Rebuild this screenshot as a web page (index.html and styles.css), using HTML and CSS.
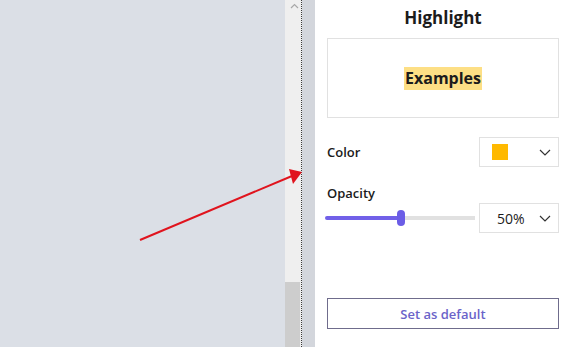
FILE: index.html
```html
<!DOCTYPE html>
<html>
<head>
<meta charset="utf-8">
<link rel="stylesheet" href="styles.css">
</head>
<body>
<div class="app">
  <div class="canvas"></div>
  <div class="scrollbar">
    <div class="scroll-track">
      <svg class="scroll-up" width="9" height="6" viewBox="0 0 9 6"><path d="M1 5 L4.5 1.5 L8 5" fill="none" stroke="#a8a8a8" stroke-width="1.2"/></svg>
    </div>
    <div class="scroll-thumb"></div>
  </div>
  <div class="gutter"><div class="gutter-line"></div></div>
  <div class="panel">
    <div class="title">Highlight</div>
    <div class="preview"><span class="preview-text">Examples</span></div>
    <div class="row row-color">
      <span class="label">Color</span>
      <div class="dropdown">
        <span class="swatch"></span>
        <svg class="chev" width="12" height="7" viewBox="0 0 12 7"><path d="M1 1 L6 6 L11 1" fill="none" stroke="#333" stroke-width="1.2"/></svg>
      </div>
    </div>
    <div class="label label-opacity">Opacity</div>
    <div class="row row-opacity">
      <div class="slider">
        <div class="slider-fill"></div>
        <div class="slider-thumb"></div>
        <div class="slider-rest"></div>
      </div>
      <div class="dropdown">
        <span class="value">50%</span>
        <svg class="chev" width="12" height="7" viewBox="0 0 12 7"><path d="M1 1 L6 6 L11 1" fill="none" stroke="#333" stroke-width="1.2"/></svg>
      </div>
    </div>
    <div class="spacer"></div>
    <button class="default-btn">Set as default</button>
  </div>
</div>
<svg class="arrow" width="565" height="347" viewBox="0 0 565 347">
  <line x1="140" y1="240" x2="292" y2="176" stroke="#e0141e" stroke-width="2"/>
  <polygon points="302,172 289,169 293,184" fill="#e0141e"/>
</svg>
</body>
</html>
```

FILE: styles.css
```css
* { box-sizing: border-box; }
html, body { margin: 0; padding: 0; }
body {
  width: 565px;
  height: 347px;
  overflow: hidden;
  font-family: "Open Sans", "Noto Sans", sans-serif;
  color: #1b1b1b;
  background: #fff;
  position: relative;
}
.app {
  display: flex;
  height: 347px;
}
.canvas {
  width: 285px;
  background: #dbdfe6;
}
.scrollbar {
  width: 15px;
  display: flex;
  flex-direction: column;
  background: #efefef;
}
.scroll-track {
  height: 282px;
  display: flex;
  justify-content: center;
  padding-top: 3px;
  padding-left: 3px;
}
.scroll-up { display: block; }
.scroll-thumb {
  flex: 1;
  background: #cdcdcd;
}
.gutter {
  width: 15px;
  background: #d3d6dc;
  display: flex;
}
.gutter-line {
  width: 2px;
  background: #eeeeee;
  border-right: 1px dotted #3a3a3a;
}
.panel {
  width: 250px;
  padding: 0 6px 0 12px;
  display: flex;
  flex-direction: column;
  background: #fff;
}
.title {
  height: 38px;
  line-height: 36px;
  text-align: center;
  font-weight: 700;
  font-size: 17px;
}
.preview {
  height: 80px;
  border: 1px solid #e1e1e1;
  display: flex;
  align-items: center;
  justify-content: center;
}
.preview-text {
  font-weight: 700;
  font-size: 16px;
  background: #fddf85;
  padding: 0 1px;
  line-height: 23px;
}
.row {
  display: flex;
  align-items: center;
  justify-content: space-between;
}
.row-color {
  margin-top: 19px;
  height: 30px;
}
.label {
  font-size: 13px;
  font-weight: 600;
}
.label-opacity {
  margin-top: 12px;
  line-height: 28px;
}
.row-opacity {
  margin-top: -4px;
  height: 30px;
}
.dropdown {
  width: 80px;
  height: 30px;
  border: 1px solid #e1e1e1;
  display: flex;
  align-items: center;
  padding: 0 7px 0 12px;
}
.swatch {
  width: 16px;
  height: 16px;
  background: #ffb900;
}
.value {
  font-size: 14px;
  margin-left: 5px;
}
.chev {
  margin-left: auto;
  display: block;
}
.slider {
  width: 150px;
  margin-left: -2px;
  display: flex;
  align-items: center;
  height: 16px;
}
.slider-fill {
  width: 72px;
  height: 4px;
  background: #7160e8;
  border-radius: 2px 0 0 2px;
}
.slider-thumb {
  width: 8px;
  height: 16px;
  border-radius: 4px;
  background: #6b5de6;
}
.slider-rest {
  flex: 1;
  height: 4px;
  background: #e1e1e1;
}
.spacer { flex: 1; }
.default-btn {
  margin-bottom: 18px;
  height: 31px;
  border: 1px solid #6f6c8c;
  background: #fff;
  color: #6b64c9;
  font-family: "Open Sans", "Noto Sans", sans-serif;
  font-weight: 600;
  font-size: 13px;
  padding: 0;
}
.arrow {
  position: absolute;
  left: 0;
  top: 0;
  pointer-events: none;
}
```
